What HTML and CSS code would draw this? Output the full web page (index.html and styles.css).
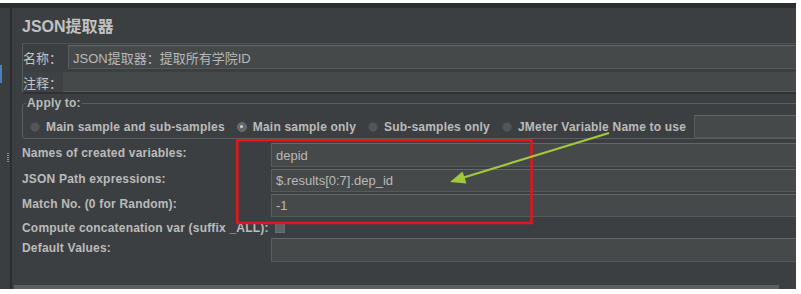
FILE: index.html
```html
<!DOCTYPE html>
<html>
<head>
<meta charset="utf-8">
<link rel="stylesheet" href="styles.css">
</head>
<body>
<div class="frame">
  <div class="side"><span class="side-mark"></span><span class="grip"></span></div>
  <div class="main">
    <div class="content">
      <h1 class="title">JSON提取器</h1>
      <div class="namebox">
        <div class="nrow"><span class="nlabel nlabel-name">名称：</span><div class="field nfield">JSON提取器：提取所有学院ID</div></div>
        <div class="nrow"><span class="nlabel nlabel-comment">注释：</span><div class="field cfield"></div></div>
      </div>
      <fieldset class="apply">
        <legend>Apply to:</legend>
        <div class="radios">
          <label class="radio"><span class="circle"></span>Main sample and sub-samples</label>
          <label class="radio"><span class="circle checked"></span>Main sample only</label>
          <label class="radio"><span class="circle"></span>Sub-samples only</label>
          <label class="radio"><span class="circle"></span>JMeter Variable Name to use</label>
          <div class="field varname"></div>
        </div>
      </fieldset>
      <div class="form">
        <div class="label">Names of created variables:</div>
        <div class="field ffield">depid</div>
        <div class="label">JSON Path expressions:</div>
        <div class="field ffield">$.results[0:7].dep_id</div>
        <div class="label">Match No. (0 for Random):</div>
        <div class="field ffield">-1</div>
        <div class="label span">Compute concatenation var (suffix _ALL):<span class="check"></span></div>
        <div class="label">Default Values:</div>
        <div class="field ffield"></div>
      </div>
    </div>
    <div class="statusbar"></div>
  </div>
</div>
<svg class="annot" width="801" height="294" viewBox="0 0 801 294">
  <rect x="237.25" y="140.25" width="294.25" height="82.75" fill="none" stroke="#e5151d" stroke-width="2.5"/>
  <line x1="609" y1="133" x2="462" y2="178" stroke="#a2c83c" stroke-width="2.2"/>
  <polygon points="450,182 466.5,183.5 462.5,171.5" fill="#a2c83c"/>
</svg>
</body>
</html>
```
FILE: styles.css
```css
* { box-sizing: border-box; }
body {
  margin: 0;
  background: #ffffff;
  font-family: "Liberation Sans", "Noto Sans CJK SC", Arial, sans-serif;
  color: #bbbbbb;
  position: relative;
  width: 801px;
  height: 294px;
  overflow: hidden;
}
.frame {
  margin-top: 3px;
  width: 796px;
  height: 286px;
  border-top: 5px solid #2c2e30;
  background: #3c3f41;
  display: flex;
  overflow: hidden;
}
.side {
  width: 12px;
  flex: none;
  border-right: 2px solid #2b2d2f;
  background: #3b3e40;
  display: flex;
  flex-direction: column;
}
.side-mark {
  margin-top: 57px;
  width: 2px;
  height: 18px;
  background: #4a7fc0;
}
.grip {
  margin-top: 70px;
  margin-left: 7px;
  width: 2px;
  height: 10px;
  background: repeating-linear-gradient(#8a8d8f 0 1px, transparent 1px 2px);
}
.main {
  flex: 1;
  min-width: 0;
  display: flex;
  flex-direction: column;
}
.content {
  width: 800px;
  padding-left: 10px;
}
.title {
  margin: 9px 0 0;
  font-size: 16px;
  line-height: 20px;
  font-weight: bold;
  color: #c2c2c2;
}
.namebox {
  margin-top: 6px;
  border-top: 1px solid #505355;
  border-left: 1px solid #595c5e;
  border-bottom: 2px solid #2f3133;
  padding-top: 1px;
}
.nrow {
  display: flex;
  align-items: center;
  font-size: 13px;
}
.nrow + .nrow { margin-top: 3px; background: #3f4244; }
.nlabel { flex: none; color: #c4c4c4; }
.nlabel-name { width: 45px; }
.nlabel-comment { width: 40px; }
.field {
  background: #46494a;
  border-top: 1px solid #646768;
  border-bottom: 1px solid #56595a;
  border-left: 1px solid #5a5d5f;
  font-size: 13px;
  color: #b9b9b9;
  display: flex;
  align-items: center;
  padding-left: 4px;
}
.nfield { flex: 1; height: 24px; }
.cfield { flex: 1; height: 20px; border-top-color: #46494a; border-left: none; }
.apply {
  margin: 2px 0 0;
  padding: 5px 0 0 7px;
  border: 1px solid #5c5f61;
  border-radius: 3px 0 0 3px;
  min-width: 0;
}
.apply legend {
  margin-left: -4px;
  padding: 0 1px;
  font-size: 12px;
  line-height: 14px;
  font-weight: bold;
  letter-spacing: 0.2px;
}
.radios {
  display: flex;
  align-items: center;
  height: 23px;
}
.radio {
  display: flex;
  align-items: center;
  gap: 6px;
  margin-right: 12px;
  font-size: 12px;
  font-weight: bold;
  letter-spacing: 0.2px;
  white-space: nowrap;
}
.circle {
  width: 10px;
  height: 10px;
  border-radius: 50%;
  background: #535658;
  border: 1px solid #4a4d4f;
  display: flex;
  align-items: center;
  justify-content: center;
}
.circle.checked {
  background: #64676a;
  border-color: #6e7173;
}
.circle.checked::after {
  content: "";
  width: 3px;
  height: 3px;
  border-radius: 50%;
  background: #d0d0d0;
}
.varname { flex: 1; height: 23px; margin-left: -4px; }
.form {
  margin-top: 4px;
  display: grid;
  grid-template-columns: 249px 1fr;
  grid-template-rows: 24px 23px 23px 17px 24px;
  row-gap: 2px;
}
.label {
  font-size: 12px;
  font-weight: bold;
  letter-spacing: 0.2px;
  display: flex;
  align-items: center;
  padding-bottom: 4px;
  white-space: nowrap;
}
.label.span { grid-column: 1 / -1; padding-bottom: 0; }
.check {
  width: 10px;
  height: 10px;
  margin-left: 6px;
  background: #5f6264;
  border: 1px solid #6c6f71;
}
.statusbar {
  margin-top: auto;
  margin-left: 2px;
  width: 765px;
  height: 4px;
  background: #5c5f61;
}
.annot {
  position: absolute;
  left: 0;
  top: 0;
  pointer-events: none;
}
```
